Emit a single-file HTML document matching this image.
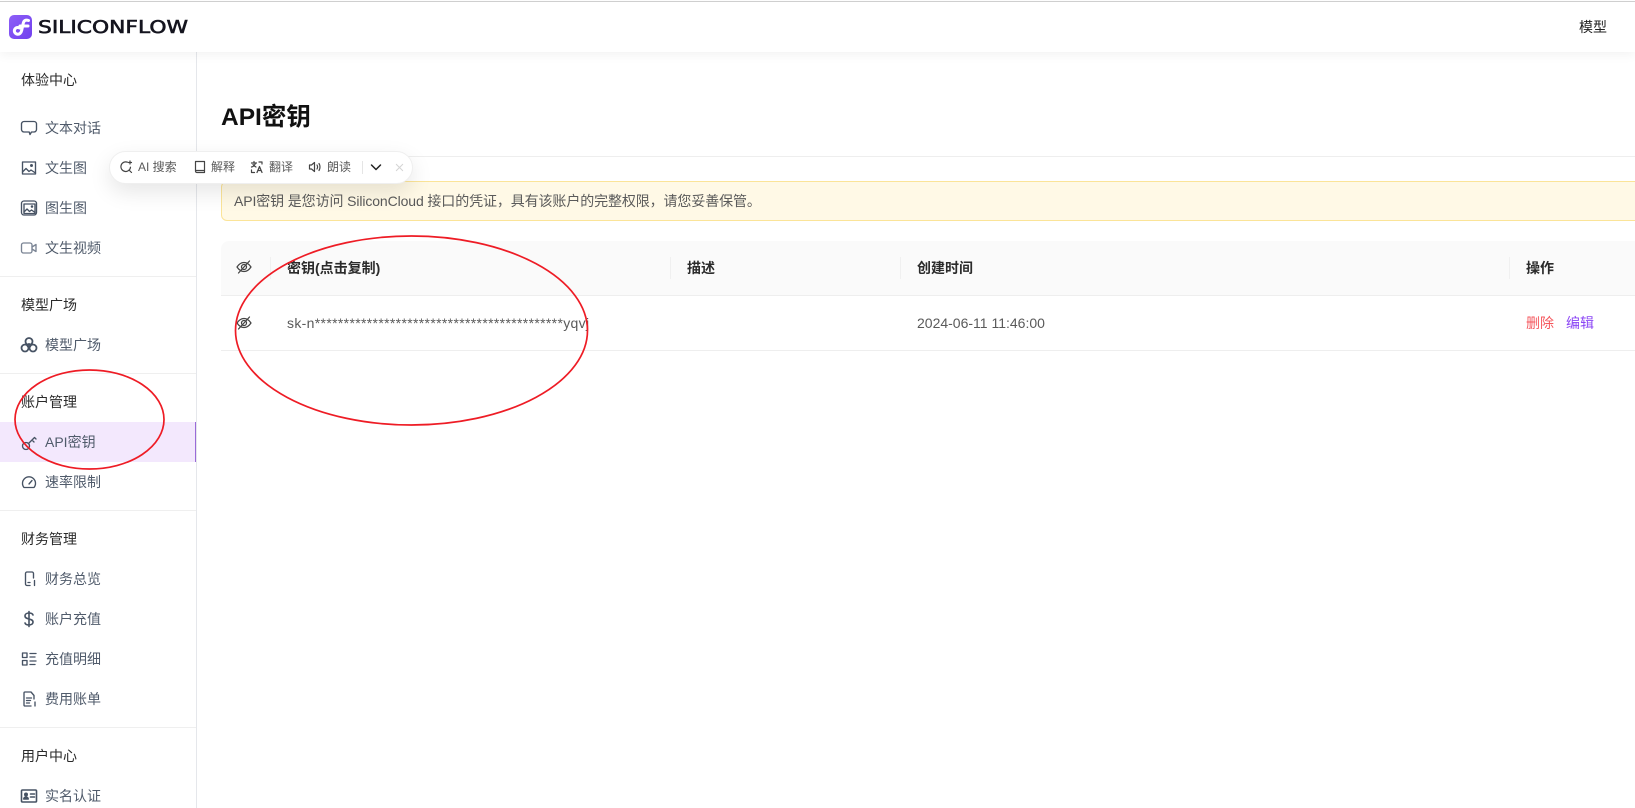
<!DOCTYPE html>
<html lang="zh"><head><meta charset="utf-8"><title>API密钥</title>
<style>
*{box-sizing:border-box;margin:0;padding:0}
html,body{width:1635px;height:808px;overflow:hidden;background:#fff;font-family:"Liberation Sans","Noto Sans CJK SC",sans-serif;font-size:14px;color:#222}
.a{position:absolute;white-space:nowrap;line-height:20px}
.t{left:21px;color:#2a2a2a;font-size:14px}
.i{left:45px;color:#505b6b;font-size:14px}
.ic{position:absolute;left:20px;width:18px;height:18px;fill:none;stroke:#465263;stroke-width:1.350;stroke-linecap:round;stroke-linejoin:round}
.d{position:absolute;left:0;width:196px;height:1px;background:#efefef}
.th{font-weight:700;color:#2b2b2b;font-size:14px}
.td{color:#5a5a5a;font-size:14px}
.v{position:absolute;top:257px;width:1px;height:22px;background:#f0f0f0}
.tb{color:#5a5a5a;font-size:12px;line-height:16px}
.ti{position:absolute;width:14px;height:14px;fill:none;stroke:#444;stroke-width:1.200;stroke-linecap:round;stroke-linejoin:round}
</style></head><body>
<div style="position:absolute;left:0;top:1px;width:1635px;height:1px;background:#cfcfcf;z-index:4"></div>
<div style="position:absolute;left:0;top:2px;width:1635px;height:50px;background:#fff;box-shadow:0 3px 10px rgba(0,0,0,.05);z-index:2"></div>
<svg style="position:absolute;left:0;top:0;z-index:3" width="200" height="52" viewBox="0 0 200 52">
<defs><linearGradient id="g" x1="0" y1="0" x2="1" y2="1"><stop offset="0" stop-color="#8d5ff7"/><stop offset="1" stop-color="#7140ee"/></linearGradient></defs>
<rect x="9" y="15" width="23" height="24" rx="5" fill="url(#g)"/>
<path d="M28.500 20.500c-3-1-4.800.2-5.300 3l-1.500 6.800c-.6 2.800-2.400 4.300-4.600 3.800-2.300-.5-3.300-2.700-2.400-4.700.9-2 3.200-2.400 5.100-1.400" fill="none" stroke="#fff" stroke-width="3" stroke-linecap="round"/>
<path d="M20 26h8" fill="none" stroke="#fff" stroke-width="3" stroke-linecap="round"/>
<text x="38" y="33" font-family="DejaVu Sans" font-weight="400" font-size="17.800" fill="#15151f" stroke="#15151f" stroke-width=".6" textLength="150" lengthAdjust="spacingAndGlyphs">SILICONFLOW</text>
</svg>
<div class="a" style="left:1579px;top:17px;color:#222;z-index:3">模型</div>

<div style="position:absolute;left:196px;top:52px;width:1px;height:756px;background:#e5e7eb"></div>

<div class="a t" style="top:70px">体验中心</div>
<svg class="ic" style="top:119px" viewBox="0 0 18 18"><path d="M4 2.500h10a2.500 2.500 0 0 1 2.500 2.500v5.500a2.500 2.500 0 0 1-2.500 2.500h-2.500L10 15.500 9.200 13H4a2.500 2.500 0 0 1-2.500-2.500V5A2.500 2.500 0 0 1 4 2.500z"/></svg>
<div class="a i" style="top:118px">文本对话</div>
<svg class="ic" style="top:159px" viewBox="0 0 18 18"><rect x="2.500" y="3" width="13" height="12"/><path d="M2.500 13l3.500-3.500 3 3 2-1.500 4.500 3"/><circle cx="11.500" cy="6.500" r=".8" fill="#465263"/></svg>
<div class="a i" style="top:158px">文生图</div>
<svg class="ic" style="top:199px" viewBox="0 0 18 18"><rect x="1.500" y="2" width="15" height="14" rx="2.500"/><rect x="4" y="5" width="11" height="9.500"/><path d="M4 13l3-3 2.500 2.500 2-1.500 3.500 2.500"/><circle cx="12" cy="7.500" r=".6" fill="#465263"/></svg>
<div class="a i" style="top:198px">图生图</div>
<svg class="ic" style="top:239px;stroke:#7a8494" viewBox="0 0 18 18"><rect x="1.500" y="4" width="10.500" height="10" rx="2"/><path d="M12 8l4-2.500v7L12 10"/></svg>
<div class="a i" style="top:238px">文生视频</div>
<div class="d" style="top:276px"></div>

<div class="a t" style="top:295px">模型广场</div>
<svg class="ic" style="top:336px;stroke-width:1.800" viewBox="0 0 18 18"><circle cx="9" cy="5.500" r="3.500"/><circle cx="5" cy="12" r="3.500"/><circle cx="13" cy="12" r="3.500"/><circle cx="9" cy="9.500" r="1.500"/></svg>
<div class="a i" style="top:335px">模型广场</div>
<div class="d" style="top:373px"></div>

<div class="a t" style="top:392px">账户管理</div>
<div style="position:absolute;left:0;top:422px;width:196px;height:40px;background:#f3e8fd;border-right:1px solid #9a6bd8"></div>
<svg class="ic" style="top:434px" viewBox="0 0 18 18"><circle cx="6" cy="12" r="3.500"/><path d="M8.500 9.500l6-6M12 6l2 2M14.500 3.500l1.500 1.500"/></svg>
<div class="a i" style="top:432px">API密钥</div>
<svg class="ic" style="top:473px" viewBox="0 0 18 18"><path d="M4 14.500a6.500 6.500 0 1 1 10 0z"/><path d="M9 11l3-3.500"/></svg>
<div class="a i" style="top:472px">速率限制</div>
<div class="d" style="top:510px"></div>

<div class="a t" style="top:529px">财务管理</div>
<svg class="ic" style="top:570px" viewBox="0 0 18 18"><path d="M10 15.500H7a1.500 1.500 0 0 1-1.500-1.500V3.500A1.500 1.500 0 0 1 7 2h5a1.500 1.500 0 0 1 1.500 1.500V8M8 12.500h2M14.500 10.500v5"/></svg>
<div class="a i" style="top:569px">财务总览</div>
<svg class="ic" style="top:610px;stroke-width:1.600" viewBox="0 0 18 18"><path d="M9 1.500v15M13 5c-.5-1.500-2-2-4-2S5 4 5 6s2 2.500 4 3 4 1 4 3-2 3-4 3-3.500-.5-4-2"/></svg>
<div class="a i" style="top:609px">账户充值</div>
<svg class="ic" style="top:650px" viewBox="0 0 18 18"><rect x="2.500" y="3" width="4.500" height="4.500"/><rect x="2.500" y="10.500" width="4.500" height="4.500"/><path d="M10 3.500h6M10 7h5M10 11h6M10 14.500h5"/></svg>
<div class="a i" style="top:649px">充值明细</div>
<svg class="ic" style="top:690px" viewBox="0 0 18 18"><path d="M11 16H5a1 1 0 0 1-1-1V3a1 1 0 0 1 1-1h6l3 3.500V9M6.500 8h5M6.500 10.500h4M6.500 13h3M15 12v4"/></svg>
<div class="a i" style="top:689px">费用账单</div>
<div class="d" style="top:727px"></div>

<div class="a t" style="top:746px">用户中心</div>
<svg class="ic" style="top:787px;stroke-width:1.600" viewBox="0 0 18 18"><rect x="1.500" y="3" width="15" height="12" rx="1"/><circle cx="6" cy="7.500" r="1.200" fill="#465263"/><path d="M3.800 12c.3-2.500 4-2.500 4.400 0zM10.500 7h4M10.500 10h4" fill="#465263"/></svg>
<div class="a i" style="top:786px">实名认证</div>

<div class="a" style="left:221px;top:101px;font-size:24.500px;font-weight:700;line-height:34px;color:#111">API密钥</div>
<div style="position:absolute;left:221px;top:156px;width:1414px;height:1px;background:#eee"></div>
<div style="position:absolute;left:221px;top:181px;width:1440px;height:40px;background:#fff9e6;border:1px solid #fbe498;border-radius:6px"></div>
<div class="a" style="left:234px;top:191px;color:#5a5a5a;font-size:14px;letter-spacing:-.11px">API密钥 是您访问 SiliconCloud 接口的凭证，具有该账户的完整权限，请您妥善保管。</div>

<div style="position:absolute;left:221px;top:241px;width:1440px;height:55px;background:#fafafa;border-bottom:1px solid #eee;border-radius:8px 8px 0 0"></div>
<div style="position:absolute;left:221px;top:350px;width:1414px;height:1px;background:#eee"></div>
<div class="v" style="left:270px"></div><div class="v" style="left:670px"></div><div class="v" style="left:900px"></div><div class="v" style="left:1509px"></div>
<svg class="ic" style="left:236px;top:259px;stroke:#444;stroke-width:1.250;width:16px;height:16px" viewBox="0 0 16 16"><path d="M1 8c2-3 4.300-4.500 7-4.500S13 5 15 8c-2 3-4.300 4.500-7 4.500S3 11 1 8z"/><circle cx="8" cy="8" r="2.500"/><path d="M2.500 14L13.500 2"/></svg>
<svg class="ic" style="left:236px;top:315px;stroke:#444;stroke-width:1.250;width:16px;height:16px" viewBox="0 0 16 16"><path d="M1 8c2-3 4.300-4.500 7-4.500S13 5 15 8c-2 3-4.300 4.500-7 4.500S3 11 1 8z"/><circle cx="8" cy="8" r="2.500"/><path d="M2.500 14L13.500 2"/></svg>
<div class="a th" style="left:287px;top:258px">密钥(点击复制)</div>
<div class="a th" style="left:687px;top:258px">描述</div>
<div class="a th" style="left:917px;top:258px">创建时间</div>
<div class="a th" style="left:1526px;top:258px">操作</div>
<div class="a td" style="left:287px;top:313px;letter-spacing:.33px">sk-n*******************************************yqvj</div>
<div class="a td" style="left:917px;top:313px">2024-06-11 11:46:00</div>
<div class="a" style="left:1526px;top:313px;color:#f5565c">删除</div>
<div class="a" style="left:1566px;top:313px;color:#8b45f5">编辑</div>

<div style="position:absolute;left:109px;top:151px;width:304px;height:33px;background:#fff;border:1px solid #efefef;border-radius:16.500px;box-shadow:0 8px 22px rgba(0,0,0,.1);z-index:5">
<svg class="ti" style="left:9px;top:8px" viewBox="0 0 14 14"><path d="M8.500 2.200a4.800 4.800 0 1 0 3 5M10 10l2.500 2.500M11 1v3M9.500 2.500h3"/></svg>
<div class="a tb" style="left:28px;top:7px">AI 搜索</div>
<svg class="ti" style="left:83px;top:8px" viewBox="0 0 14 14"><path d="M2.500 1.500h9v11H4a1.500 1.500 0 0 1-1.500-1.300zM2.500 10.500h9"/></svg>
<div class="a tb" style="left:101px;top:7px">解释</div>
<svg class="ti" style="left:140px;top:8px" viewBox="0 0 14 14"><path d="M1.500 3h5M4 1.500V3M5.500 3c-.5 2-2 3.500-4 4M3 4.500c.5 1 2 2 3 2.500M7 12.500l2.500-6 2.500 6M8 10.500h3M9 2h3v2M1.500 10v2.500h3"/></svg>
<div class="a tb" style="left:159px;top:7px">翻译</div>
<svg class="ti" style="left:198px;top:8px" viewBox="0 0 14 14"><path d="M1.500 5v4h2l3 2.500v-9l-3 2.500zM9 5c.7 1.200.7 2.800 0 4M11 3.500c1.300 2 1.300 5 0 7"/></svg>
<div class="a tb" style="left:217px;top:7px">朗读</div>
<div style="position:absolute;left:252px;top:9px;width:1px;height:13px;background:#e5e5e5"></div>
<svg class="ti" style="left:259px;top:8px;stroke:#222;stroke-width:1.500" viewBox="0 0 14 14"><path d="M2.500 5l4.500 4.500L11.500 5"/></svg>
<svg class="ti" style="left:285px;top:11px;width:9px;height:9px;stroke:#d5d5d5" viewBox="0 0 10 10"><path d="M1.500 1.500l7 7M8.500 1.500l-7 7"/></svg>
</div>

<svg style="position:absolute;left:0;top:0;z-index:6;pointer-events:none" width="1635" height="808">
<ellipse cx="411.500" cy="330.500" rx="176" ry="94.500" fill="none" stroke="#ee1c25" stroke-width="1.700"/>
<ellipse cx="89.500" cy="419.500" rx="74.500" ry="49.500" fill="none" stroke="#ee1c25" stroke-width="1.700"/>
</svg>
</body></html>
